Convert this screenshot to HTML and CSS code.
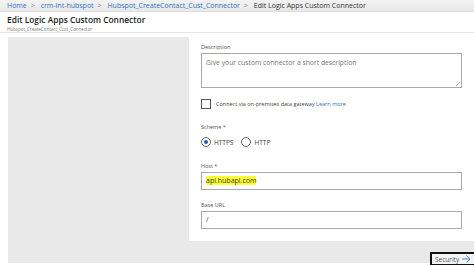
FILE: index.html
```html
<!DOCTYPE html>
<html lang="en">
<head>
    <meta charset="UTF-8">
    <title>Edit Logic Apps Custom Connector</title>
    <link rel="stylesheet" href="styles.css">
</head>
<body>
    <!-- 面包屑 -->
    <div class="crumbs">
        <a href="#">Home</a><span class="sep">&gt;</span>
        <a href="#">crm-int-hubspot</a><span class="sep">&gt;</span>
        <a href="#">Hubspot_CreateContact_Cust_Connector</a><span class="sep">&gt;</span>
        <span class="here">Edit Logic Apps Custom Connector</span>
    </div>
    <!-- 标题 -->
    <div class="head">
        <h1>Edit Logic Apps Custom Connector</h1>
        <p>Hubspot_CreateContact_Cust_Connector</p>
    </div>
    <!-- 主体 -->
    <div class="main">
        <div class="body">
            <div class="side"></div>
            <div class="panel">
                <label class="lbl">Description</label>
                <div class="area">Give your custom connector a short description<span class="grip"></span></div>
                <div class="check">
                    <span class="box"></span>
                    <span>Connect via on-premises data gateway <a href="#">Learn more</a></span>
                </div>
                <label class="lbl">Scheme *</label>
                <div class="radios">
                    <span class="radio on"></span><span class="rtxt">HTTPS</span>
                    <span class="radio"></span><span class="rtxt">HTTP</span>
                </div>
                <label class="lbl">Host *</label>
                <div class="input"><mark>api.hubapi.com</mark></div>
                <label class="lbl">Base URL</label>
                <div class="input">/</div>
            </div>
        </div>
        <div class="foot">
            <button class="next">Security<svg width="9" height="8" viewBox="0 0 9 8"><path d="M0 4H8M4.5 0.5L8 4L4.5 7.5" fill="none" stroke="#3d8bd4" stroke-width="1"/></svg></button>
        </div>
    </div>
</body>
</html>
```

FILE: styles.css
```css
/* 清除默认样式 */
*{
    margin: 0;
    padding: 0;
    box-sizing: border-box;
}

body{
    width: 474px;
    height: 265px;
    overflow: hidden;
    background-color: #fff;
    font-family: "Open Sans", "Noto Sans", sans-serif;
    color: #333;
}

a{
    color: #2f73c4;
    text-decoration: none;
}

/* 面包屑 */
.crumbs{
    height: 12px;
    padding-left: 7px;
    font-size: 7px;
    line-height: 12px;
    white-space: nowrap;
    background: linear-gradient(#f3f3f3, #e8e8e8);
    border-bottom: 1px solid #ddd;
}

.crumbs .sep{
    margin: 0 4px;
    color: #888;
}

.crumbs .here{
    color: #333;
}

/* 标题 */
.head{
    height: 21px;
    padding: 2px 7px 0;
    border-bottom: 1px solid #e4e4e4;
}

.head h1{
    font-size: 8.4px;
    font-weight: 600;
    line-height: 12px;
    color: #222;
}

.head p{
    font-size: 4.5px;
    line-height: 6px;
    color: #777;
}

.main{
    margin: 4px 0 0 8px;
    height: 226px;
    background-color: #e9e9e9;
}

.body{
    display: flex;
    height: 204px;
}

.side{
    width: 181px;
}

.panel{
    flex: 1;
    background-color: #fff;
    padding: 6px 12px 0 12px;
    display: flex;
    flex-direction: column;
}

.lbl{
    height: 8px;
    font-size: 5.5px;
    line-height: 8px;
    color: #555;
}

.area{
    position: relative;
    height: 35px;
    margin-top: 2px;
    padding: 4px 4px;
    border: 1px solid #a9a9a9;
    font-size: 6.8px;
    color: #777;
}

.grip{
    position: absolute;
    right: 1px;
    bottom: 1px;
    width: 4px;
    height: 4px;
    background: linear-gradient(135deg, transparent 45%, #bbb 45%, #bbb 60%, transparent 60%);
}

.check{
    display: flex;
    align-items: center;
    gap: 5px;
    margin: 11px 0 14px;
    font-size: 5.5px;
    color: #444;
}

.check .box{
    width: 10px;
    height: 10px;
    border: 1px solid #555;
}

.radios{
    display: flex;
    align-items: center;
    height: 12px;
    margin: 5px 0 14px;
    font-size: 6.5px;
    color: #444;
}

.radio{
    width: 10px;
    height: 10px;
    border: 1px solid #666;
    border-radius: 50%;
    position: relative;
}

.radio.on::after{
    content: "";
    position: absolute;
    left: 2px;
    top: 2px;
    width: 4px;
    height: 4px;
    border-radius: 50%;
    background-color: #1c5fae;
}

.rtxt{
    margin: 0 8px 0 3px;
}

.input{
    height: 18px;
    margin: 2px 0 11px;
    padding: 0 4px;
    border: 1px solid #a9a9a9;
    font-size: 7px;
    line-height: 16px;
    color: #333;
}

.input mark{
    background-color: #ffff33;
    color: #333;
}

/* 底部按钮 */
.foot{
    display: flex;
    justify-content: flex-end;
    padding-top: 11px;
}

.next{
    width: 44px;
    height: 14px;
    border: 2px solid #111;
    border-right: none;
    background-color: #f4f4f4;
    font-family: inherit;
    font-size: 6.5px;
    color: #555;
    display: flex;
    align-items: center;
    gap: 3px;
    padding-left: 3px;
}
```
